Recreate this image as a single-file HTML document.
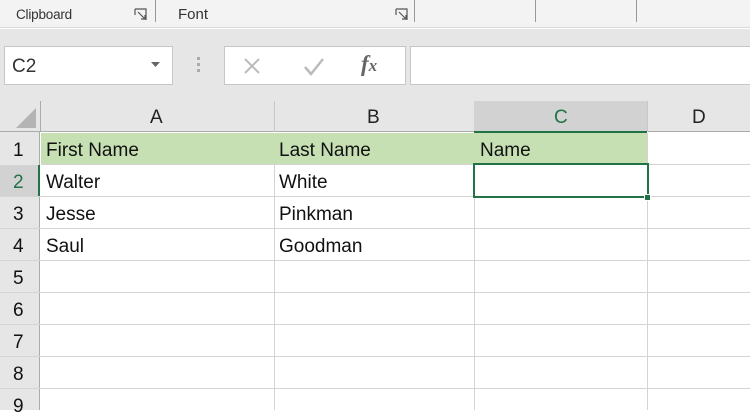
<!DOCTYPE html>
<html><head><style>
*{margin:0;padding:0;box-sizing:border-box}
body{width:750px;height:410px;overflow:hidden;position:relative;background:#fff;font-family:"Liberation Sans",sans-serif}
.a{position:absolute}
.t{font-size:19px;color:#111}
</style></head><body>
<div class="a" style="left:0;top:0;width:750px;height:28px;background:#f3f3f3;border-bottom:1px solid #d8d8d8"></div>
<div class="a" style="left:16px;top:7px;font-size:13.5px;color:#333;letter-spacing:-0.2px">Clipboard</div>
<div class="a" style="left:178px;top:6px;font-size:15px;color:#333">Font</div>
<svg class="a" style="left:134px;top:8px" width="14" height="14"><path d="M1 1h11v11M1 1v6M1 1h6M4 4l7 7M7 11h4V7" stroke="#555" fill="none" stroke-width="1.2"/></svg>
<svg class="a" style="left:395px;top:8px" width="14" height="14"><path d="M1 1h11v11M1 1v6M1 1h6M4 4l7 7M7 11h4V7" stroke="#555" fill="none" stroke-width="1.2"/></svg>
<div class="a" style="left:155px;top:0;width:1px;height:22px;background:#999"></div>
<div class="a" style="left:414px;top:0;width:1px;height:22px;background:#999"></div>
<div class="a" style="left:535px;top:0;width:1px;height:22px;background:#999"></div>
<div class="a" style="left:636px;top:0;width:1px;height:22px;background:#999"></div>
<div class="a" style="left:0;top:29px;width:750px;height:72px;background:#e6e6e6"></div>
<div class="a" style="left:4px;top:46px;width:169px;height:39px;background:#fff;border:1px solid #c6c6c6"></div>
<div class="a" style="left:12px;top:56px;font-size:19px;color:#333">C2</div>
<svg class="a" style="left:151px;top:62px" width="10" height="6"><path d="M0 0h9L4.5 5z" fill="#666"/></svg>
<div class="a" style="left:197px;top:57px;width:3px;height:3px;background:#aaa;box-shadow:0 6px #aaa,0 12px #aaa"></div>
<div class="a" style="left:224px;top:46px;width:182px;height:39px;background:#fff;border:1px solid #c6c6c6"></div>
<svg class="a" style="left:242px;top:56px" width="20" height="20"><path d="M3 3l14 14M17 3L3 17" stroke="#bbb" stroke-width="2"/></svg>
<svg class="a" style="left:302px;top:56px" width="24" height="22"><path d="M3 11l6 7L21 3" stroke="#bbb" stroke-width="2.5" fill="none"/></svg>
<div class="a" style="left:361px;top:51px;font-family:'Liberation Serif',serif;font-style:italic;font-weight:bold;font-size:23px;color:#666">f<span style="font-size:17px">x</span></div>
<div class="a" style="left:410px;top:46px;width:345px;height:39px;background:#fff;border:1px solid #c6c6c6"></div>
<div class="a" style="left:0;top:101px;width:750px;height:31px;background:#e6e6e6;border-bottom:1px solid #ababab"></div>
<div class="a" style="left:0;top:132px;width:40px;height:278px;background:#e6e6e6;border-right:1px solid #ababab"></div>
<svg class="a" style="left:14px;top:106px" width="24" height="24"><path d="M2 22L22 2V22z" fill="#b4b4b4"/></svg>
<div class="a" style="left:40px;top:101px;width:1px;height:31px;background:#ababab"></div>
<div class="a" style="left:274px;top:101px;width:1px;height:31px;background:#c8c8c8"></div>
<div class="a" style="left:474px;top:101px;width:173px;height:32px;background:#d2d2d2;border-bottom:2px solid #217346"></div>
<div class="a" style="left:647px;top:101px;width:1px;height:31px;background:#c8c8c8"></div>
<div class="a t" style="left:150px;top:107px;color:#222">A</div>
<div class="a t" style="left:367px;top:107px;color:#222">B</div>
<div class="a t" style="left:554px;top:107px;color:#217346">C</div>
<div class="a t" style="left:692px;top:107px;color:#222">D</div>
<div class="a" style="left:41px;top:133px;width:606px;height:32px;background:#c6e0b4"></div>
<div class="a" style="left:0;top:165px;width:40px;height:32px;background:#d2d2d2;border-right:2px solid #217346"></div>
<div class="a" style="left:41px;top:164px;width:709px;height:1px;background:#d4d4d4"></div>
<div class="a" style="left:0;top:196px;width:750px;height:1px;background:#d4d4d4"></div>
<div class="a" style="left:0;top:228px;width:750px;height:1px;background:#d4d4d4"></div>
<div class="a" style="left:0;top:260px;width:750px;height:1px;background:#d4d4d4"></div>
<div class="a" style="left:0;top:292px;width:750px;height:1px;background:#d4d4d4"></div>
<div class="a" style="left:0;top:324px;width:750px;height:1px;background:#d4d4d4"></div>
<div class="a" style="left:0;top:356px;width:750px;height:1px;background:#d4d4d4"></div>
<div class="a" style="left:0;top:388px;width:750px;height:1px;background:#d4d4d4"></div>
<div class="a" style="left:274px;top:165px;width:1px;height:245px;background:#d4d4d4"></div>
<div class="a" style="left:474px;top:165px;width:1px;height:245px;background:#d4d4d4"></div>
<div class="a" style="left:647px;top:133px;width:1px;height:277px;background:#d4d4d4"></div>
<div class="a t" style="left:13px;top:140px">1</div>
<div class="a t" style="left:13px;top:172px;color:#217346">2</div>
<div class="a t" style="left:13px;top:204px">3</div>
<div class="a t" style="left:13px;top:236px">4</div>
<div class="a t" style="left:13px;top:268px">5</div>
<div class="a t" style="left:13px;top:300px">6</div>
<div class="a t" style="left:13px;top:332px">7</div>
<div class="a t" style="left:13px;top:364px">8</div>
<div class="a t" style="left:13px;top:396px">9</div>
<div class="a t" style="left:46px;top:140px">First Name</div>
<div class="a t" style="left:279px;top:140px">Last Name</div>
<div class="a t" style="left:480px;top:140px">Name</div>
<div class="a t" style="left:46px;top:172px">Walter</div>
<div class="a t" style="left:279px;top:172px">White</div>
<div class="a t" style="left:46px;top:204px">Jesse</div>
<div class="a t" style="left:279px;top:204px">Pinkman</div>
<div class="a t" style="left:46px;top:236px">Saul</div>
<div class="a t" style="left:279px;top:236px">Goodman</div>
<div class="a" style="left:473px;top:163px;width:176px;height:35px;border:2px solid #217346"></div>
<div class="a" style="left:644px;top:194px;width:7px;height:7px;background:#217346;border:1px solid #fff"></div>
</body></html>
